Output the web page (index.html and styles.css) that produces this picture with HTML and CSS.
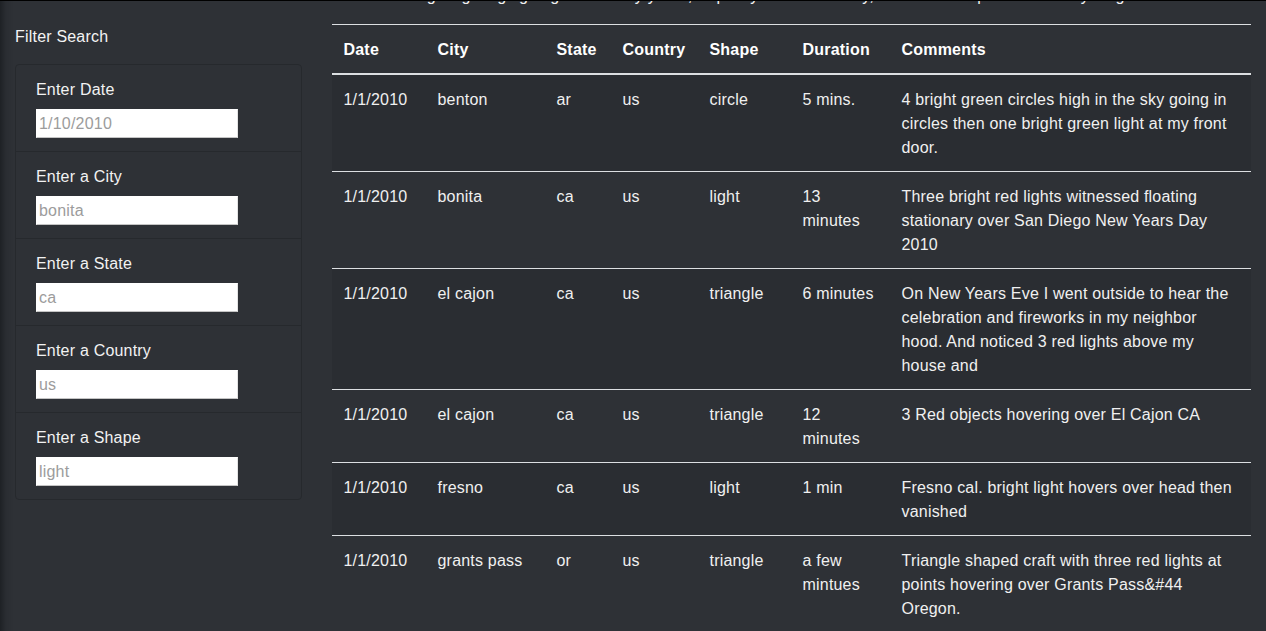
FILE: index.html
```html
<!DOCTYPE html>
<html lang="en">
<head>
<meta charset="utf-8">
<title>UFO Sightings</title>
<link rel="stylesheet" href="styles.css">
</head>
<body>
<div class="edge-line"></div>
<div class="intro">
  <p>Browse through sightings going back many years, or pick your favorite city, state and shape to see if anything is out there.</p>
</div>
<div class="row">
  <aside class="sidebar">
    <div class="filter-title">Filter Search</div>
    <ul class="filters">
      <li class="filter"><label for="datetime">Enter Date</label><input id="datetime" type="text" placeholder="1/10/2010"></li>
      <li class="filter"><label for="city">Enter a City</label><input id="city" type="text" placeholder="bonita"></li>
      <li class="filter"><label for="state">Enter a State</label><input id="state" type="text" placeholder="ca"></li>
      <li class="filter"><label for="country">Enter a Country</label><input id="country" type="text" placeholder="us"></li>
      <li class="filter"><label for="shape">Enter a Shape</label><input id="shape" type="text" placeholder="light"></li>
    </ul>
  </aside>
  <main class="content">
    <table class="sightings">
      <colgroup>
        <col class="c-date"><col class="c-city"><col class="c-state"><col class="c-country"><col class="c-shape"><col class="c-duration"><col class="c-comments">
      </colgroup>
      <thead>
        <tr><th>Date</th><th>City</th><th>State</th><th>Country</th><th>Shape</th><th>Duration</th><th>Comments</th></tr>
      </thead>
      <tbody>
        <tr><td>1/1/2010</td><td>benton</td><td>ar</td><td>us</td><td>circle</td><td>5 mins.</td><td>4 bright green circles high in the sky going in circles then one bright green light at my front door.</td></tr>
        <tr><td>1/1/2010</td><td>bonita</td><td>ca</td><td>us</td><td>light</td><td>13 minutes</td><td>Three bright red lights witnessed floating stationary over San Diego New Years Day 2010</td></tr>
        <tr><td>1/1/2010</td><td>el cajon</td><td>ca</td><td>us</td><td>triangle</td><td>6 minutes</td><td>On New Years Eve I went outside to hear the celebration and fireworks in my neighbor hood. And noticed 3 red lights above my house and</td></tr>
        <tr><td>1/1/2010</td><td>el cajon</td><td>ca</td><td>us</td><td>triangle</td><td>12 minutes</td><td>3 Red objects hovering over El Cajon CA</td></tr>
        <tr><td>1/1/2010</td><td>fresno</td><td>ca</td><td>us</td><td>light</td><td>1 min</td><td>Fresno cal. bright light hovers over head then vanished</td></tr>
        <tr><td>1/1/2010</td><td>grants pass</td><td>or</td><td>us</td><td>triangle</td><td>a few mintues</td><td>Triangle shaped craft with three red lights at points hovering over Grants Pass&amp;#44 Oregon.</td></tr>
      </tbody>
    </table>
  </main>
</div>
</body>
</html>
```
FILE: styles.css
```css
* { box-sizing: border-box; }
html, body { margin: 0; padding: 0; }
body {
  background: linear-gradient(to right, #1e2125 0, #2a2d32 6px, #2e3136 14px, #2e3136 100%);
  color: #f0f0f0;
  font-family: "Liberation Sans", Arial, Helvetica, sans-serif;
  font-size: 16px;
  line-height: 24px;
  letter-spacing: 0.2px;
  min-height: 631px;
  overflow: hidden;
}
.edge-line {
  position: absolute;
  left: 0; top: 0;
  width: 100%;
  height: 1px;
  background: #000;
  z-index: 2;
}
.intro {
  height: 24px;
  overflow: hidden;
  padding: 0 120px 0 330px;
}
.intro p {
  margin: -16px 0 0;
  text-align: center;
  white-space: nowrap;
  color: #f0f0f0;
}
.row {
  display: flex;
  width: 100%;
}
.sidebar {
  width: 25%;
  padding: 0 15px;
}
.content {
  width: 75%;
  padding: 0 15px;
}
.filter-title {
  margin-top: 1px;
  margin-bottom: 15px;
  color: #f4f4f4;
}
.filters {
  list-style: none;
  margin: 0;
  padding: 0;
  border: 1px solid #26292d;
  border-radius: 4px;
}
.filter {
  padding: 13px 20px 13px;
  border-top: 1px solid #26292d;
}
.filter:first-child { border-top: none; }
.filter label {
  display: block;
  margin-bottom: 7px;
  color: #f2f2f2;
}
.filter input {
  display: block;
  width: 202px;
  height: 29px;
  margin: 0;
  padding: 0 2px;
  border: 1px solid #fff;
  border-bottom-color: #c4c4c4;
  border-right-color: #e4e4e4;
  background: #fff;
  font-family: "Liberation Sans", Arial, Helvetica, sans-serif;
  font-size: 16px;
  letter-spacing: 0.2px;
  color: #222;
  outline: none;
}
.filter input::placeholder { color: #9c9c9c; }

.sightings {
  width: 100%;
  border-collapse: collapse;
  table-layout: fixed;
}
.c-date { width: 94px; }
.c-city { width: 119px; }
.c-state { width: 66px; }
.c-country { width: 87px; }
.c-shape { width: 93px; }
.c-duration { width: 99px; }
.sightings th, .sightings td {
  padding: 13px 12px 11px;
  text-align: left;
  vertical-align: top;
  border-top: 1px solid #dcdfe2;
}
.sightings th {
  font-weight: bold;
  color: #fff;
  border-bottom: 2px solid #dcdfe2;
}
.sightings td { color: #f0f0f0; }
.sightings tbody tr:first-child td { border-top: none; }
.sightings tbody tr:nth-child(odd) { background: rgba(0, 0, 0, 0.07); }
```
